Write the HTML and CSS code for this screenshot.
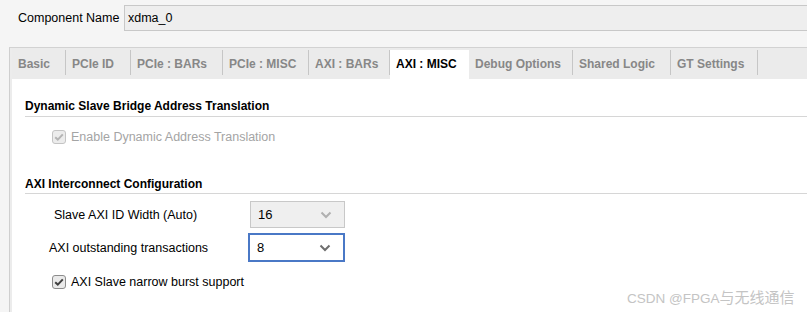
FILE: index.html
```html
<!DOCTYPE html>
<html>
<head>
<meta charset="utf-8">
<link rel="stylesheet" href="styles.css">
</head>
<body>
<div class="header">
  <span class="header-label">Component Name</span>
  <div class="name-input">xdma_0</div>
</div>
<div class="panel">
  <div class="tabbar">
    <div class="tab t1">Basic</div>
    <div class="tab t2">PCIe ID</div>
    <div class="tab t3">PCIe : BARs</div>
    <div class="tab t4">PCIe : MISC</div>
    <div class="tab t5">AXI : BARs</div>
    <div class="tab active t6">AXI : MISC</div>
    <div class="tab t7">Debug Options</div>
    <div class="tab t8">Shared Logic</div>
    <div class="tab t9">GT Settings</div>
  </div>
  <div class="content">
    <div class="section-title first">Dynamic Slave Bridge Address Translation</div>
    <div class="check-row disabled-row">
      <svg class="checkbox" width="14" height="14" viewBox="0 0 14 14">
        <rect x="0.5" y="0.5" width="13" height="13" rx="2.5" fill="#ececec" stroke="#c4c4c4"/>
        <path d="M3.2 7.2 L5.8 9.6 L10.8 4.4" fill="none" stroke="#b4b4b4" stroke-width="2"/>
      </svg>
      <span>Enable Dynamic Address Translation</span>
    </div>
    <div class="section-title second">AXI Interconnect Configuration</div>
    <div class="field-row r1">
      <span class="field-label l1">Slave AXI ID Width (Auto)</span>
      <div class="combo disabled-combo">
        <span>16</span>
        <svg class="chev" width="12" height="8" viewBox="0 0 12 8"><path d="M1.5 1.5 L6 6 L10.5 1.5" fill="none" stroke="#b0b0b0" stroke-width="2"/></svg>
      </div>
    </div>
    <div class="field-row r2">
      <span class="field-label l2">AXI outstanding transactions</span>
      <div class="combo focused-combo">
        <span>8</span>
        <svg class="chev" width="12" height="8" viewBox="0 0 12 8"><path d="M1.5 1.5 L6 6 L10.5 1.5" fill="none" stroke="#6e6e6e" stroke-width="2"/></svg>
      </div>
    </div>
    <div class="check-row last">
      <svg class="checkbox" width="14" height="14" viewBox="0 0 14 14">
        <rect x="0.5" y="0.5" width="13" height="13" rx="2.5" fill="#eaeaea" stroke="#8c8c8c"/>
        <path d="M3.2 7.2 L5.8 9.6 L10.8 4.4" fill="none" stroke="#404040" stroke-width="2"/>
      </svg>
      <span>AXI Slave narrow burst support</span>
    </div>
    <div class="watermark">CSDN @FPGA<span class="cjk">与无线通信</span></div>
  </div>
</div>
</body>
</html>
```
FILE: styles.css
```css
html, body {
  margin: 0;
  padding: 0;
}
body {
  width: 807px;
  height: 312px;
  overflow: hidden;
  background: #f5f5f5;
  font-family: "Liberation Sans", Arial, sans-serif;
  color: #000;
}
.header {
  display: flex;
  align-items: center;
  height: 26px;
  padding: 5px 0 16px 18px;
}
.header-label {
  font-size: 12.5px;
  width: 106px;
}
.name-input {
  flex: 1;
  box-sizing: border-box;
  height: 26px;
  border: 1px solid #c8c8c8;
  border-right: none;
  background: #eeeeee;
  font-size: 12.5px;
  line-height: 24px;
  padding-left: 3px;
}
.panel {
  margin-left: 9px;
  border-left: 1px solid #cfcfcf;
  border-top: 1px solid #d2d2d2;
  padding-left: 2px;
  background: #ececec;
  height: 264px;
  display: flex;
  flex-direction: column;
}
.tabbar {
  display: flex;
  align-items: flex-start;
  height: 31px;
  padding-top: 2px;
  box-sizing: border-box;
  background: #ebebeb;
}
.tab {
  box-sizing: border-box;
  height: 25px;
  border-right: 1px solid #c6c6c6;
  padding-left: 6px;
  padding-top: 1px;
  font-size: 12px;
  font-weight: bold;
  color: #878787;
  line-height: 26px;
  white-space: nowrap;
}
.tab.active {
  height: 29px;
  background: #fff;
  border-right: none;
  color: #000;
}
.t1 { width: 54px; }
.t2 { width: 65px; }
.t3 { width: 92px; }
.t4 { width: 86px; }
.t5 { width: 81px; }
.t6 { width: 79px; }
.t7 { width: 104px; }
.t8 { width: 98px; }
.t9 { width: 87px; }

.content {
  position: relative;
  flex: 1;
  background: #fff;
  padding-left: 13px;
  display: flex;
  flex-direction: column;
  align-items: stretch;
}
.section-title {
  font-size: 12px;
  font-weight: bold;
  line-height: 14px;
  border-bottom: 1px solid #d6d6d6;
}
.section-title.first {
  margin-top: 20px;
  padding-bottom: 3px;
}
.section-title.second {
  margin-top: 32px;
  padding-bottom: 2px;
}
.check-row {
  display: flex;
  align-items: center;
  height: 16px;
  padding-left: 27px;
  font-size: 12.5px;
}
.check-row .checkbox {
  margin-right: 5px;
}
.disabled-row {
  margin-top: 12px;
  color: #a4a4a4;
}
.check-row.last {
  margin-top: 12px;
}
.field-row {
  display: flex;
  align-items: center;
  font-size: 12.5px;
}
.field-row.r1 {
  margin-top: 7px;
}
.field-row.r2 {
  margin-top: 5px;
}
.field-label.l1 {
  width: 196px;
  padding-left: 29px;
}
.field-label.l2 {
  width: 200px;
  padding-left: 24px;
}
.combo {
  box-sizing: border-box;
  display: flex;
  align-items: center;
  justify-content: space-between;
  padding: 0 12px 0 7px;
  font-size: 13px;
}
.disabled-combo {
  width: 95px;
  height: 27px;
  background: #efefef;
  border: 1px solid #c8c8c8;
}
.focused-combo {
  width: 97px;
  height: 29px;
  background: #fff;
  border: 2px solid #4a78c6;
  padding-left: 7px;
  margin-left: -1px;
}
.watermark {
  position: absolute;
  left: 615px;
  top: 207px;
  font-size: 13.5px;
  color: #c4c4c4;
  font-family: "Liberation Sans", "Noto Sans CJK SC", sans-serif;
  white-space: nowrap;
}
.watermark .cjk {
  font-size: 15px;
}
```
